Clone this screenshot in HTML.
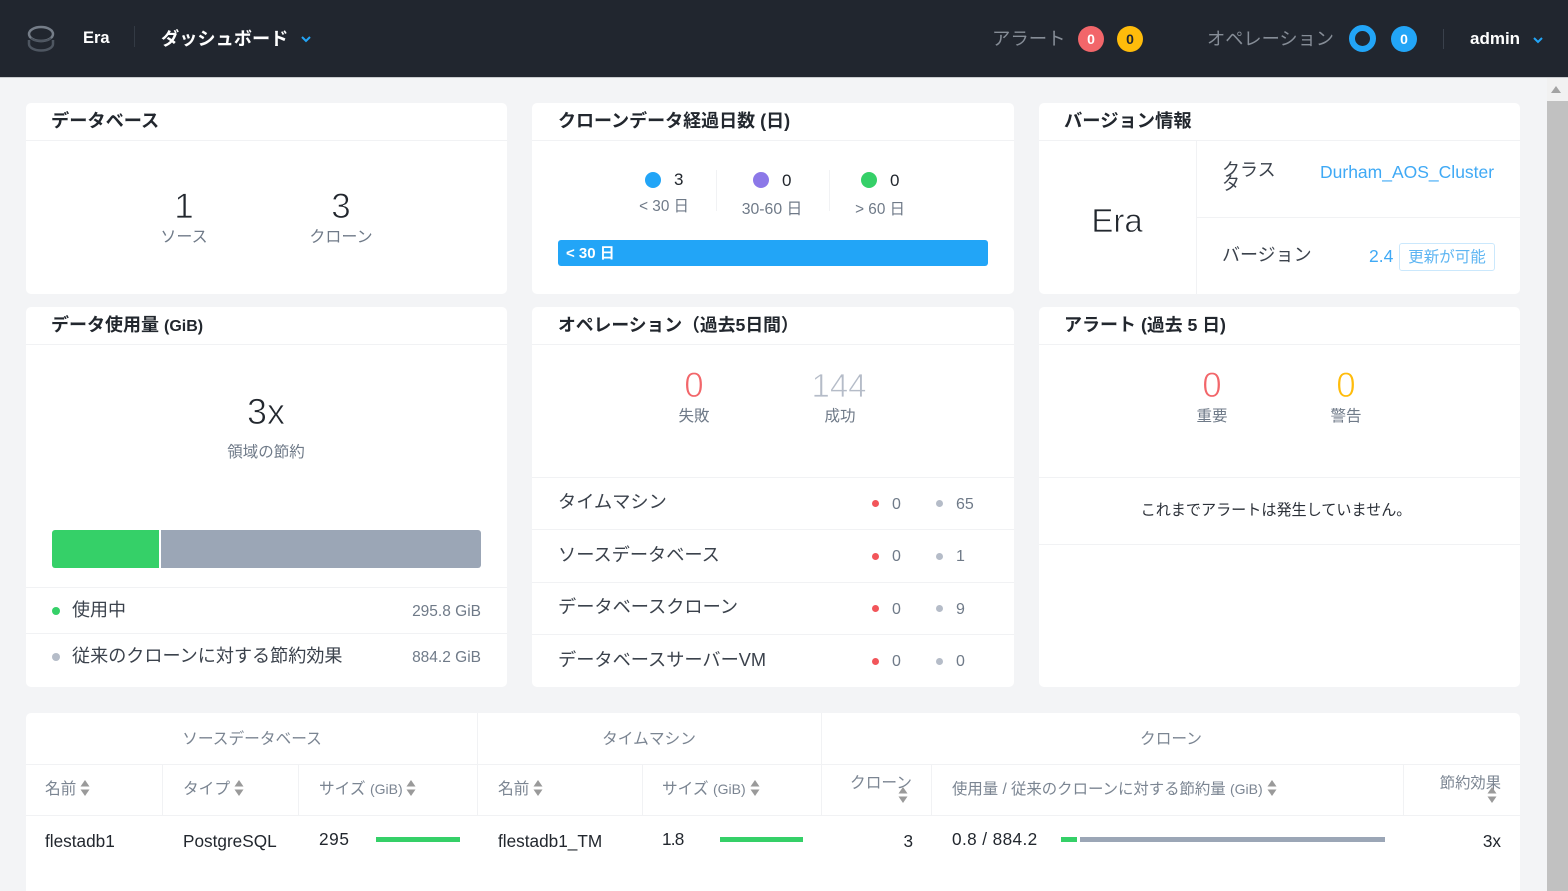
<!DOCTYPE html>
<html lang="ja"><head><meta charset="utf-8"><title>Era</title>
<style>
html,body{margin:0;padding:0;width:1568px;height:891px;overflow:hidden;background:#f3f4f6}
body{position:relative;font-family:"Liberation Sans","Noto Sans CJK JP",sans-serif;color:#22272e;font-size:16px}
.a{position:absolute;white-space:nowrap;line-height:20px}
.c{transform:translateX(-50%)}
.r{transform:translateX(-100%)}
.card{position:absolute;background:#fff;border-radius:5px;overflow:hidden}
.hl{position:absolute;height:1px;background:#f1f2f4}
.vl{position:absolute;width:1px;background:#f1f2f4}
.h{font-size:18.200px;font-weight:700;color:#22272e}
.big{font-size:35px;line-height:40px;-webkit-text-stroke:.8px #fff}
.lab{font-size:16px;color:#6f7a88}
.g{color:#6f7a88}
.d{position:absolute;border-radius:50%}
.b{position:absolute;border-radius:50%;width:26px;height:26px;top:26px;font-size:14px;font-weight:700;line-height:26px;text-align:center}
.th{font-size:15.700px;color:#7b8592}
.td{font-size:17.200px;color:#22272e}
.s{position:absolute;width:10px;height:16px}
</style></head><body>

<!-- header -->
<div style="position:absolute;left:0;top:0;width:1568px;height:77px;background:#21262f;border-bottom:1px solid #c9cbce"></div>
<svg style="position:absolute;left:24px;top:20px" width="36" height="36" viewBox="0 0 36 36" fill="none"><path d="M5 20v4c0 3.600 5.400 6.500 12 6.500S29 27.600 29 24v-4" stroke="#4e5661" stroke-width="2.500"/><ellipse cx="17" cy="14" rx="12" ry="7" stroke="#757d88" stroke-width="2.500"/><path d="M7 18c2 2 6 3 10 3s8-1 10-3" stroke="#4e5661" stroke-width="2"/></svg>
<div class="a" style="left:83px;top:28px;font-size:16.500px;font-weight:700;color:#fff">Era</div>
<div style="position:absolute;left:134px;top:26px;width:1px;height:21px;background:#333a44"></div>
<div class="a" style="left:161px;top:29px;font-size:18.200px;font-weight:700;color:#fff">ダッシュボード</div>
<svg style="position:absolute;left:301px;top:36px" width="10" height="7" viewBox="0 0 10 7" fill="none"><path d="M1 1l4 4 4-4" stroke="#22a5f7" stroke-width="2"/></svg>

<div class="a" style="left:992px;top:29px;font-size:18.400px;color:#868d97">アラート</div>
<div class="b" style="left:1078px;background:#f2666a;color:#fff">0</div>
<div class="b" style="left:1117px;background:#ffbc0b;color:#21262f">0</div>
<div class="a" style="left:1207px;top:29px;font-size:18.200px;color:#868d97">オペレーション</div>
<div style="position:absolute;left:1349px;top:25px;width:15px;height:15px;border:6px solid #22a5f7;border-radius:50%"></div>
<div class="b" style="left:1391px;background:#22a5f7;color:#fff">0</div>
<div style="position:absolute;left:1443px;top:29px;width:1px;height:20px;background:#3a414c"></div>
<div class="a" style="left:1470px;top:29px;font-size:17px;font-weight:700;color:#fff">admin</div>
<svg style="position:absolute;left:1533px;top:37px" width="10" height="7" viewBox="0 0 10 7" fill="none"><path d="M1 1l4 4 4-4" stroke="#22a5f7" stroke-width="2"/></svg>

<!-- scrollbar -->
<div style="position:absolute;left:1547px;top:78px;width:21px;height:813px;background:#f1f1f1"></div>
<div style="position:absolute;left:1547px;top:101px;width:21px;height:790px;background:#c1c1c1"></div>
<div style="position:absolute;left:1551px;top:86px;width:0;height:0;border-left:5.500px solid transparent;border-right:5.500px solid transparent;border-bottom:7px solid #a3a3a3"></div>

<!-- cards -->
<div class="card" style="left:26px;top:103px;width:481px;height:191px"></div>
<div class="card" style="left:532px;top:103px;width:482px;height:191px"></div>
<div class="card" style="left:1039px;top:103px;width:481px;height:191px"></div>
<div class="card" style="left:26px;top:307px;width:481px;height:380px"></div>
<div class="card" style="left:532px;top:307px;width:482px;height:380px"></div>
<div class="card" style="left:1039px;top:307px;width:481px;height:380px"></div>
<div class="card" style="left:26px;top:713px;width:1494px;height:190px"></div>

<!-- card 1 -->
<div class="a h" style="left:51px;top:111px">データベース</div>
<div class="hl" style="left:26px;top:140px;width:481px"></div>
<div class="a big c" style="left:184px;top:187px">1</div>
<div class="a big c" style="left:341px;top:187px">3</div>
<div class="a lab c" style="left:184px;top:228px">ソース</div>
<div class="a lab c" style="left:341px;top:228px">クローン</div>

<!-- card 2 -->
<div class="a h" style="left:558px;top:111px;font-size:18px">クローンデータ経過日数 (日)</div>
<div class="hl" style="left:532px;top:140px;width:482px"></div>
<div class="d" style="left:645px;top:172px;width:16px;height:16px;background:#22a5f7"></div>
<div class="d" style="left:753px;top:172px;width:16px;height:16px;background:#8c78e8"></div>
<div class="d" style="left:861px;top:172px;width:16px;height:16px;background:#35d068"></div>
<div class="a" style="left:674px;top:170px;font-size:17px">3</div>
<div class="a" style="left:782px;top:171px;font-size:17px">0</div>
<div class="a" style="left:890px;top:171px;font-size:17px">0</div>
<div class="vl" style="left:716px;top:170px;height:41px"></div>
<div class="vl" style="left:829px;top:170px;height:41px"></div>
<div class="a lab c" style="left:664px;top:197px;font-size:15.300px">&lt; 30 日</div>
<div class="a lab c" style="left:772px;top:200px;font-size:15.800px">30-60 日</div>
<div class="a lab c" style="left:880px;top:200px;font-size:15.300px">&gt; 60 日</div>
<div style="position:absolute;left:558px;top:240px;width:430px;height:26px;background:#22a5f7;border-radius:3px"></div>
<div class="a" style="left:566px;top:244px;font-size:15px;font-weight:700;color:#fff">&lt; 30 日</div>

<!-- card 3 -->
<div class="a h" style="left:1064px;top:111px;font-size:18.300px">バージョン情報</div>
<div class="hl" style="left:1039px;top:140px;width:481px"></div>
<div class="vl" style="left:1196px;top:141px;height:153px"></div>
<div class="hl" style="left:1197px;top:217px;width:323px"></div>
<div class="a c" style="left:1117px;top:201px;font-size:33px;line-height:40px;-webkit-text-stroke:.7px #fff">Era</div>
<div class="a" style="left:1222px;top:163px;font-size:18px;color:#3b424c;line-height:14px;width:56px;white-space:normal;word-break:break-all">クラスタ</div>
<div class="a" style="left:1320px;top:162px;font-size:17.500px;color:#3fa9f5">Durham_AOS_Cluster</div>
<div class="a" style="left:1222px;top:245px;font-size:18px;color:#3b424c">バージョン</div>
<div class="a" style="left:1369px;top:246px;font-size:17.500px;color:#3fa9f5">2.4</div>
<div class="a" style="left:1399px;top:243px;width:94px;height:26px;border:1px solid #cbe8fc;border-radius:3px;text-align:center;line-height:27px;font-size:15.500px;color:#5db5f2">更新が可能</div>

<!-- card 4 -->
<div class="a h" style="left:51px;top:315px;font-size:18px">データ使用量 <span style="font-size:16px">(GiB)</span></div>
<div class="hl" style="left:26px;top:344px;width:481px"></div>
<div class="a big c" style="left:266px;top:392px;font-size:36px">3x</div>
<div class="a lab c" style="left:266px;top:443px;font-size:15.500px">領域の節約</div>
<div style="position:absolute;left:52px;top:530px;width:107px;height:38px;background:#35d068;border-radius:3px 0 0 3px"></div>
<div style="position:absolute;left:161px;top:530px;width:320px;height:38px;background:#9ba6b6;border-radius:0 3px 3px 0"></div>
<div class="hl" style="left:26px;top:587px;width:481px"></div>
<div class="hl" style="left:26px;top:633px;width:481px"></div>
<div class="d" style="left:52px;top:607px;width:8px;height:8px;background:#35d068"></div>
<div class="d" style="left:52px;top:653px;width:8px;height:8px;background:#b5bcc8"></div>
<div class="a" style="left:72px;top:600px;font-size:18px;color:#3b424c">使用中</div>
<div class="a" style="left:72px;top:646px;font-size:18.100px;color:#3b424c">従来のクローンに対する節約効果</div>
<div class="a r" style="left:481px;top:602px;font-size:15.500px;color:#6f7a88">295.8 GiB</div>
<div class="a r" style="left:481px;top:648px;font-size:15.500px;color:#6f7a88">884.2 GiB</div>

<!-- card 5 -->
<div class="a h" style="left:558px;top:315px;font-size:17.800px">オペレーション（過去5日間）</div>
<div class="hl" style="left:532px;top:344px;width:482px"></div>
<div class="a big c" style="left:694px;top:366px;color:#f2666a">0</div>
<div class="a big c" style="left:839px;top:366px;color:#b5bcc8;font-size:33px">144</div>
<div class="a lab c" style="left:694px;top:407px;font-size:15.500px">失敗</div>
<div class="a lab c" style="left:840px;top:407px;font-size:15.500px">成功</div>
<div class="hl" style="left:532px;top:477px;width:482px"></div>
<div class="hl" style="left:532px;top:529px;width:482px"></div>
<div class="hl" style="left:532px;top:582px;width:482px"></div>
<div class="hl" style="left:532px;top:634px;width:482px"></div>
<div class="a" style="left:558px;top:492px;font-size:18.200px;color:#3b424c">タイムマシン</div>
<div class="a" style="left:558px;top:545px;font-size:18.200px;color:#3b424c">ソースデータベース</div>
<div class="a" style="left:558px;top:597px;font-size:18.200px;color:#3b424c">データベースクローン</div>
<div class="a" style="left:558px;top:650px;font-size:18.200px;color:#3b424c">データベースサーバーVM</div>

<div class="d" style="left:872px;top:500px;width:7px;height:7px;background:#f2555a"></div>
<div class="d" style="left:936px;top:500px;width:7px;height:7px;background:#b5bcc8"></div>
<div class="a g" style="left:892px;top:495px;font-size:16px">0</div>
<div class="a g" style="left:956px;top:495px;font-size:16px">65</div>
<div class="d" style="left:872px;top:553px;width:7px;height:7px;background:#f2555a"></div>
<div class="d" style="left:936px;top:553px;width:7px;height:7px;background:#b5bcc8"></div>
<div class="a g" style="left:892px;top:547px;font-size:16px">0</div>
<div class="a g" style="left:956px;top:547px;font-size:16px">1</div>
<div class="d" style="left:872px;top:605px;width:7px;height:7px;background:#f2555a"></div>
<div class="d" style="left:936px;top:605px;width:7px;height:7px;background:#b5bcc8"></div>
<div class="a g" style="left:892px;top:600px;font-size:16px">0</div>
<div class="a g" style="left:956px;top:600px;font-size:16px">9</div>
<div class="d" style="left:872px;top:658px;width:7px;height:7px;background:#f2555a"></div>
<div class="d" style="left:936px;top:658px;width:7px;height:7px;background:#b5bcc8"></div>
<div class="a g" style="left:892px;top:652px;font-size:16px">0</div>
<div class="a g" style="left:956px;top:652px;font-size:16px">0</div>

<!-- card 6 -->
<div class="a h" style="left:1064px;top:315px;font-size:18px">アラート <span style="font-size:17.800px">(過去 5 日)</span></div>
<div class="hl" style="left:1039px;top:344px;width:481px"></div>
<div class="a big c" style="left:1212px;top:366px;color:#f2666a">0</div>
<div class="a big c" style="left:1346px;top:366px;color:#ffbc0b">0</div>
<div class="a lab c" style="left:1212px;top:407px;font-size:15.500px">重要</div>
<div class="a lab c" style="left:1346px;top:407px;font-size:15.500px">警告</div>
<div class="hl" style="left:1039px;top:477px;width:481px"></div>
<div class="hl" style="left:1039px;top:544px;width:481px"></div>
<div class="a c" style="left:1276px;top:501px;font-size:15.100px;color:#2b3038">これまでアラートは発生していません。</div>

<!-- table -->
<div class="vl" style="left:477px;top:713px;height:102px"></div>
<div class="vl" style="left:821px;top:713px;height:102px"></div>
<div class="hl" style="left:26px;top:764px;width:1494px"></div>
<div class="hl" style="left:26px;top:815px;width:1494px"></div>
<div class="vl" style="left:162px;top:765px;height:50px"></div>
<div class="vl" style="left:298px;top:765px;height:50px"></div>
<div class="vl" style="left:642px;top:765px;height:50px"></div>
<div class="vl" style="left:931px;top:765px;height:50px"></div>
<div class="vl" style="left:1403px;top:765px;height:50px"></div>

<div class="a th c" style="left:252px;top:730px">ソースデータベース</div>
<div class="a th c" style="left:649px;top:730px">タイムマシン</div>
<div class="a th c" style="left:1171px;top:730px">クローン</div>

<div class="a th" style="left:45px;top:780px">名前</div>
<div class="a th" style="left:183px;top:780px">タイプ</div>
<div class="a th" style="left:319px;top:779px">サイズ <span style="font-size:14px">(GiB)</span></div>
<div class="a th" style="left:498px;top:780px">名前</div>
<div class="a th" style="left:662px;top:779px">サイズ <span style="font-size:14px">(GiB)</span></div>
<div class="a th r" style="left:912px;top:774px">クローン</div>
<div class="a th" style="left:952px;top:779px;font-size:15.400px">使用量 / 従来のクローンに対する節約量 <span style="font-size:14px">(GiB)</span></div>
<div class="a th r" style="left:1501px;top:774px;font-size:15.300px">節約効果</div>

<svg class="s" style="left:80px;top:780px" viewBox="0 0 10 16"><path d="M5 0l4.500 6.500h-9zM5 16l-4.500-6.500h9z" fill="#9a9a9a"/></svg>
<svg class="s" style="left:234px;top:780px" viewBox="0 0 10 16"><path d="M5 0l4.500 6.500h-9zM5 16l-4.500-6.500h9z" fill="#9a9a9a"/></svg>
<svg class="s" style="left:406px;top:780px" viewBox="0 0 10 16"><path d="M5 0l4.500 6.500h-9zM5 16l-4.500-6.500h9z" fill="#9a9a9a"/></svg>
<svg class="s" style="left:533px;top:780px" viewBox="0 0 10 16"><path d="M5 0l4.500 6.500h-9zM5 16l-4.500-6.500h9z" fill="#9a9a9a"/></svg>
<svg class="s" style="left:750px;top:780px" viewBox="0 0 10 16"><path d="M5 0l4.500 6.500h-9zM5 16l-4.500-6.500h9z" fill="#9a9a9a"/></svg>
<svg class="s" style="left:898px;top:787px" viewBox="0 0 10 16"><path d="M5 0l4.500 6.500h-9zM5 16l-4.500-6.500h9z" fill="#9a9a9a"/></svg>
<svg class="s" style="left:1267px;top:780px" viewBox="0 0 10 16"><path d="M5 0l4.500 6.500h-9zM5 16l-4.500-6.500h9z" fill="#9a9a9a"/></svg>
<svg class="s" style="left:1487px;top:787px" viewBox="0 0 10 16"><path d="M5 0l4.500 6.500h-9zM5 16l-4.500-6.500h9z" fill="#9a9a9a"/></svg>

<div class="a td" style="left:45px;top:831px">flestadb1</div>
<div class="a td" style="left:183px;top:831px">PostgreSQL</div>
<div class="a td" style="left:319px;top:829px;letter-spacing:.6px">295</div>
<div style="position:absolute;left:376px;top:837px;width:84px;height:5px;background:#35d068"></div>
<div class="a td" style="left:498px;top:831px">flestadb1_TM</div>
<div class="a td" style="left:662px;top:829px;letter-spacing:-.8px">1.8</div>
<div style="position:absolute;left:720px;top:837px;width:83px;height:5px;background:#35d068"></div>
<div class="a td r" style="left:913px;top:831px">3</div>
<div class="a td" style="left:952px;top:829px;letter-spacing:.4px">0.8 / 884.2</div>
<div style="position:absolute;left:1061px;top:837px;width:16px;height:5px;background:#35d068"></div>
<div style="position:absolute;left:1080px;top:837px;width:305px;height:5px;background:#9ba6b6"></div>
<div class="a td r" style="left:1501px;top:831px">3x</div>

</body></html>
